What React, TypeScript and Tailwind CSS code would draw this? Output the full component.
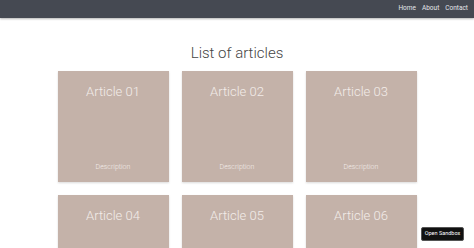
const articles = ["01", "02", "03", "04", "05", "06"];

const ArticleCard: React.FC<{ num: string }> = ({ num }) => {
  return (
    <div className="w-[111px] h-[111px] bg-[#c4b2a9] shadow-[0_1px_2px_rgba(0,0,0,0.15)] flex flex-col items-center justify-between pt-[14px] pb-[11px]">
      <h2 className="text-[13px] font-light text-[#f3ede9] leading-none">
        Article {num}
      </h2>
      <p className="text-[7px] font-light text-[#f3ede9] leading-none">
        Description
      </p>
    </div>
  );
};

export default function App() {
  return (
    <div
      className="relative w-[474px] h-[248px] overflow-hidden bg-white"
      style={{ fontFamily: "Roboto, 'Noto Sans', sans-serif" }}
    >
      {/* Navbar */}
      <nav className="h-[18px] bg-[#454952] flex items-center justify-end pr-[6px] gap-[6px] text-[6.5px] text-[#e4e6ea] shadow-[0_1px_2px_rgba(0,0,0,0.3)]">
        <span>Home</span>
        <span>About</span>
        <span>Contact</span>
      </nav>

      {/* Content */}
      <main className="flex flex-col items-center">
        <h1 className="mt-[28px] text-[15px] font-light text-[#444] leading-none">
          List of articles
        </h1>
        <div className="mt-[10px] grid grid-cols-3 gap-[13px]">
          {articles.map((num) => (
            <ArticleCard key={num} num={num} />
          ))}
        </div>
      </main>

      <button className="absolute left-[421px] top-[227px] w-[43px] h-[14px] rounded-[2px] bg-[#111] border border-[#555] text-white text-[5.5px] leading-none">
        Open Sandbox
      </button>
    </div>
  );
}
